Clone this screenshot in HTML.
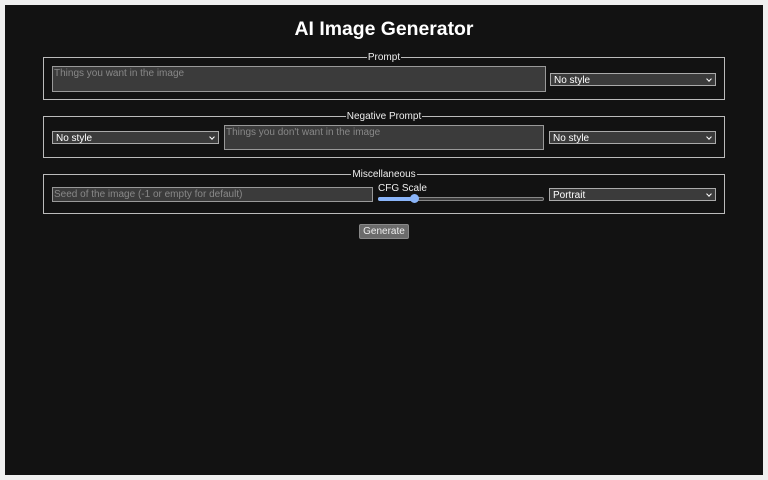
<!DOCTYPE html>
<html><head><style>
*{box-sizing:border-box;margin:0;padding:0}
body{width:768px;height:480px;background:#efefef;font-family:"Liberation Sans",sans-serif;position:relative;overflow:hidden}
.panel{position:absolute;left:5px;top:5px;width:758px;height:470px;background:#121212}
.a{position:absolute}
h1{position:absolute;left:0;width:768px;top:18px;text-align:center;color:#fff;font-size:19.4px;font-weight:bold}
.fs{position:absolute;left:43px;width:682px;border:1px solid #bbb}
.lg{position:absolute;top:-6px;left:0;width:100%;text-align:center;font-size:10px;color:#eee;line-height:12px}
.lg span{background:#121212;padding:0 1px}
.ta{position:absolute;background:#3b3b3b;border:1px solid #999;color:#888;font-size:10px;padding:1px 1px;line-height:12px}
.sel{position:absolute;background:#3b3b3b;border:1px solid #aaa;color:#fff;font-size:10px;padding:0 3px;line-height:13px;height:13px}
.sel:after{content:"";position:absolute;right:4px;top:3px;width:3px;height:3px;border-right:1.5px solid #fff;border-bottom:1.5px solid #fff;transform:rotate(45deg)}
</style></head><body>
<div class="panel"></div>
<h1>AI Image Generator</h1>
<div class="fs" style="top:57px;height:43px"><div class="lg"><span>Prompt</span></div></div>
<div class="ta" style="left:52px;top:66px;width:494px;height:26px">Things you want in the image</div>
<div class="sel" style="left:550px;top:73px;width:166px">No style</div>

<div class="fs" style="top:116px;height:42px"><div class="lg"><span>Negative Prompt</span></div></div>
<div class="sel" style="left:52px;top:131px;width:167px">No style</div>
<div class="ta" style="left:224px;top:125px;width:320px;height:25px">Things you don't want in the image</div>
<div class="sel" style="left:549px;top:131px;width:167px">No style</div>

<div class="fs" style="top:174px;height:40px"><div class="lg"><span>Miscellaneous</span></div></div>
<div class="ta" style="left:52px;top:187px;width:321px;height:15px;line-height:13px;padding-top:0">Seed of the image (-1 or empty for default)</div>
<div class="a" style="left:378px;top:183px;color:#eee;font-size:10px">CFG Scale</div>
<div class="a" style="left:378px;top:197px;width:166px;height:4px;background:#3b3b3b;border:1px solid #888;border-radius:2px"></div>
<div class="a" style="left:378px;top:197px;width:37px;height:4px;background:#8ab4f8;border-radius:2px"></div>
<div class="a" style="left:410px;top:194px;width:9px;height:9px;background:#8ab4f8;border-radius:50%"></div>
<div class="sel" style="left:549px;top:188px;width:167px">Portrait</div>

<div class="a" style="left:359px;top:224px;width:50px;height:15px;background:#6b6b6b;border:1px solid #888;border-radius:2px;color:#eee;font-size:10px;text-align:center;line-height:13px">Generate</div>
</body></html>
